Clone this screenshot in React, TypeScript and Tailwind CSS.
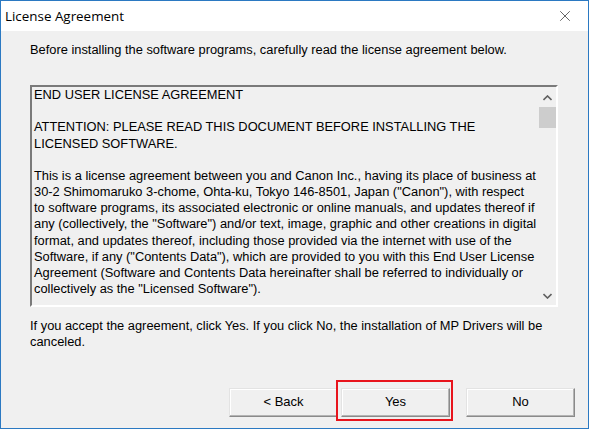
import { X } from "lucide-react";

const paragraph = [
  "This is a license agreement between you and Canon Inc., having its place of business at",
  '30-2 Shimomaruko 3-chome, Ohta-ku, Tokyo 146-8501, Japan ("Canon"), with respect',
  "to software programs, its associated electronic or online manuals, and updates thereof if",
  'any (collectively, the "Software") and/or text, image, graphic and other creations in digital',
  "format, and updates thereof, including those provided via the internet with use of the",
  'Software, if any ("Contents Data"), which are provided to you with this End User License',
  "Agreement (Software and Contents Data hereinafter shall be referred to individually or",
  'collectively as the "Licensed Software").',
];

const WinButton = ({ label }: { label: string }) => (
  <button
    type="button"
    className="flex h-[29px] w-[109px] items-center justify-center border border-t-[#e3e3e3] border-l-[#e3e3e3] border-r-[#8a8a8a] border-b-[#8a8a8a] bg-[#f0f0f0] text-[13px] text-black shadow-[inset_-1px_-1px_0_#b4b4b4,inset_1px_1px_0_#ffffff]"
  >
    {label}
  </button>
);

export default function App() {
  return (
    <div className="h-[430px] w-[590px] bg-white font-['Liberation_Sans',Arial,sans-serif]">
      <div className="flex h-[429px] w-[589px] flex-col border border-[#2b79c2]">
        {/* title bar */}
        <div className="flex h-[30px] shrink-0 items-center justify-between bg-white pl-[4px] pr-[14px]">
          <span className="font-['Open_Sans',sans-serif] text-[13.4px] text-black">License Agreement</span>
          <X size={18} strokeWidth={1} className="text-[#333]" />
        </div>

        {/* body */}
        <div className="flex flex-1 flex-col bg-[#f0f0f0] pl-[29px] pr-[29px] text-[12.85px] leading-[16.2px] text-black">
          <p className="mt-[11px] whitespace-nowrap">
            Before installing the software programs, carefully read the license agreement below.
          </p>

          <div className="mt-[27px] flex h-[222px] w-[528px] border-2 border-t-[#7a7a7a] border-l-[#7a7a7a] border-r-[#ffffff] border-b-[#ffffff]">
            <div className="flex-1 overflow-hidden whitespace-nowrap pl-[2px]">
              <p>END USER LICENSE AGREEMENT</p>
              <p className="mt-[16px]">ATTENTION: PLEASE READ THIS DOCUMENT BEFORE INSTALLING THE</p>
              <p>LICENSED SOFTWARE.</p>
              <div className="mt-[16px]">
                {paragraph.map((line) => (
                  <p key={line}>{line}</p>
                ))}
              </div>
            </div>
            {/* scrollbar */}
            <div className="flex w-[17px] flex-col items-center bg-[#f0f0f0]">
              <div className="flex h-[17px] w-full items-center justify-center">
                <svg width="9" height="6" viewBox="0 0 9 6" className="mt-[5px]">
                  <path d="M0.5 5 L4.5 1 L8.5 5" fill="none" stroke="#606060" strokeWidth="1.6" />
                </svg>
              </div>
              <div className="mt-[3px] h-[21px] w-full bg-[#cdcdcd]" />
              <div className="flex-1" />
              <div className="flex h-[17px] w-full items-center justify-center">
                <svg width="9" height="6" viewBox="0 0 9 6" className="mb-[2px]">
                  <path d="M0.5 1 L4.5 5 L8.5 1" fill="none" stroke="#606060" strokeWidth="1.6" />
                </svg>
              </div>
            </div>
          </div>

          <p className="mt-[11px] whitespace-nowrap">
            If you accept the agreement, click Yes. If you click No, the installation of MP Drivers will be
          </p>
          <p>canceled.</p>

          <div className="-mr-[16px] mt-auto mb-[11px] flex items-center justify-end gap-[3px]">
            <WinButton label="< Back" />
            <div className="relative">
              <WinButton label="Yes" />
              <div className="pointer-events-none absolute -left-[5px] -right-[3px] -top-[8px] -bottom-[4px] border-2 border-[#e8141c]" />
            </div>
            <div className="ml-[13px]">
              <WinButton label="No" />
            </div>
          </div>
        </div>
      </div>
    </div>
  );
}
